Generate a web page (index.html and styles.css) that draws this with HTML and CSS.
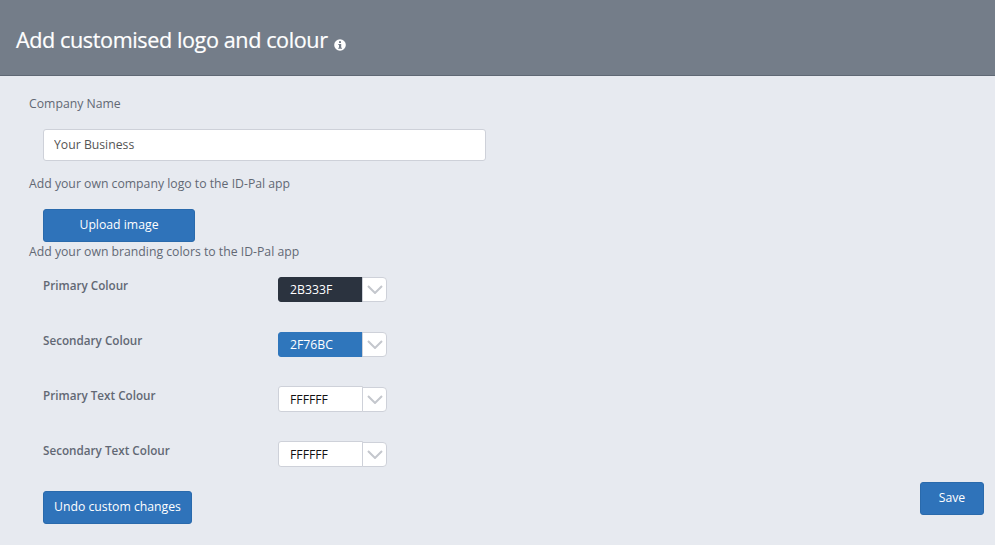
FILE: index.html
```html
<!DOCTYPE html>
<html lang="en">
  <head>
    <meta charset="UTF-8">
    <title>Add customised logo and colour</title>
    <link rel="stylesheet" href="styles.css">
  </head>
  <body>
    <div class="page-header">
      <h1>Add customised logo and colour</h1>
      <svg class="info-icon" viewBox="0 0 12 12" width="12" height="12">
        <circle cx="6" cy="6" r="5.8" fill="#fff"/>
        <rect x="5" y="2.2" width="2" height="1.8" fill="#747d89"/>
        <path d="M4.3 5h2.9v3.7h.8v1H4.2v-1H5V6H4.3z" fill="#747d89"/>
      </svg>
    </div>

    <div class="content">
      <p class="field-label company-label">Company Name</p>
      <input class="text-input" type="text" value="Your Business">

      <p class="field-label logo-label">Add your own company logo to the ID-Pal app</p>
      <button class="btn upload-btn">Upload image</button>

      <p class="field-label brand-label">Add your own branding colors to the ID-Pal app</p>

      <div class="colour-list">
        <div class="colour-row">
          <label>Primary Colour</label>
          <div class="picker">
            <span class="picker-value dark">2B333F</span>
            <span class="picker-arrow"><svg viewBox="0 0 16 9" width="16" height="9"><path d="M1 1l7 7 7-7" /></svg></span>
          </div>
        </div>
        <div class="colour-row">
          <label>Secondary Colour</label>
          <div class="picker">
            <span class="picker-value blue">2F76BC</span>
            <span class="picker-arrow"><svg viewBox="0 0 16 9" width="16" height="9"><path d="M1 1l7 7 7-7" /></svg></span>
          </div>
        </div>
        <div class="colour-row">
          <label>Primary Text Colour</label>
          <div class="picker">
            <span class="picker-value">FFFFFF</span>
            <span class="picker-arrow"><svg viewBox="0 0 16 9" width="16" height="9"><path d="M1 1l7 7 7-7" /></svg></span>
          </div>
        </div>
        <div class="colour-row">
          <label>Secondary Text Colour</label>
          <div class="picker">
            <span class="picker-value">FFFFFF</span>
            <span class="picker-arrow"><svg viewBox="0 0 16 9" width="16" height="9"><path d="M1 1l7 7 7-7" /></svg></span>
          </div>
        </div>
      </div>

      <div class="actions">
        <button class="btn undo-btn">Undo custom changes</button>
        <button class="btn save-btn">Save</button>
      </div>
    </div>
  </body>
</html>
```

FILE: styles.css
```css
body{
  margin: 0;
  padding: 0;
  background: #e7eaf0;
  font-family: "Open Sans", "Noto Sans", sans-serif;
  font-size: 12.24px;
  color: #626874;
  overflow: hidden;
}

.page-header{
  display: flex;
  align-items: center;
  height: 70px;
  padding-top: 5px;
  padding-left: 16px;
  background: #747d89;
  border-bottom: 1px solid #5f6874;
  color: #fff;
}

.page-header h1{
  margin: 0;
  font-size: 21.6px;
  font-weight: 400;
  letter-spacing: -0.4px;
  line-height: 30px;
  -webkit-text-stroke: 0.2px #fff;
}

.info-icon{
  margin-left: 6px;
  margin-top: 9px;
}

.content{
  padding: 0 11px 0 43px;
}

.field-label{
  margin: 0 0 0 -14px;
  line-height: 16px;
}

.company-label{
  margin-top: 20px;
}

.text-input{
  display: block;
  box-sizing: border-box;
  width: 443px;
  height: 32px;
  margin-top: 17px;
  padding: 0 10px 2px;
  background: #fff;
  border: 1px solid #ced1d9;
  border-radius: 3px;
  font: inherit;
  color: #555;
}

.logo-label{
  margin-top: 15px;
}

.btn{
  display: block;
  box-sizing: border-box;
  height: 33px;
  padding: 0 0 2px;
  background: #2f73ba;
  border: 1px solid #2a6aac;
  border-radius: 3px;
  font-family: inherit;
  font-size: 12.24px;
  color: #fff;
}

.upload-btn{
  width: 152px;
  margin-top: 17px;
}

.brand-label{
  margin-top: 2px;
}

.colour-list{
  margin-top: 17px;
}

.colour-row{
  display: flex;
  height: 25px;
  margin-bottom: 30px;
}

.colour-row label{
  width: 235px;
  font-size: 11.7px;
  font-weight: 600;
  line-height: 16px;
}

.picker{
  display: flex;
  width: 109px;
  height: 25px;
}

/* the white value boxes stand 1px taller than the arrow */
.picker-value{
  box-sizing: border-box;
  width: 85px;
  height: 26px;
  margin-top: -1px;
  padding: 1px 0 0 11px;
  background: #fff;
  border: 1px solid #ced1d9;
  border-radius: 3px 0 0 3px;
  line-height: 24px;
  color: #111;
}

.picker-value.dark,
.picker-value.blue{
  height: 25px;
  margin-top: 0;
  padding-top: 0;
  color: #fff;
}

.picker-value.dark{
  background: #2b333f;
  border-color: #2b333f;
}

.picker-value.blue{
  background: #2f76bc;
  border-color: #2f76bc;
}

.picker-arrow{
  display: flex;
  align-items: center;
  justify-content: center;
  box-sizing: border-box;
  width: 25px;
  height: 25px;
  margin-left: -1px;
  background: #fff;
  border: 1px solid #ced1d9;
  border-radius: 0 4px 4px 0;
}

.picker-arrow path{
  fill: none;
  stroke: #c4c7cd;
  stroke-width: 2;
}

.actions{
  display: flex;
  justify-content: space-between;
  align-items: flex-end;
  margin-top: -15px;
}

.undo-btn{
  width: 149px;
}

.save-btn{
  width: 64px;
  margin-bottom: 9px;
}
```
